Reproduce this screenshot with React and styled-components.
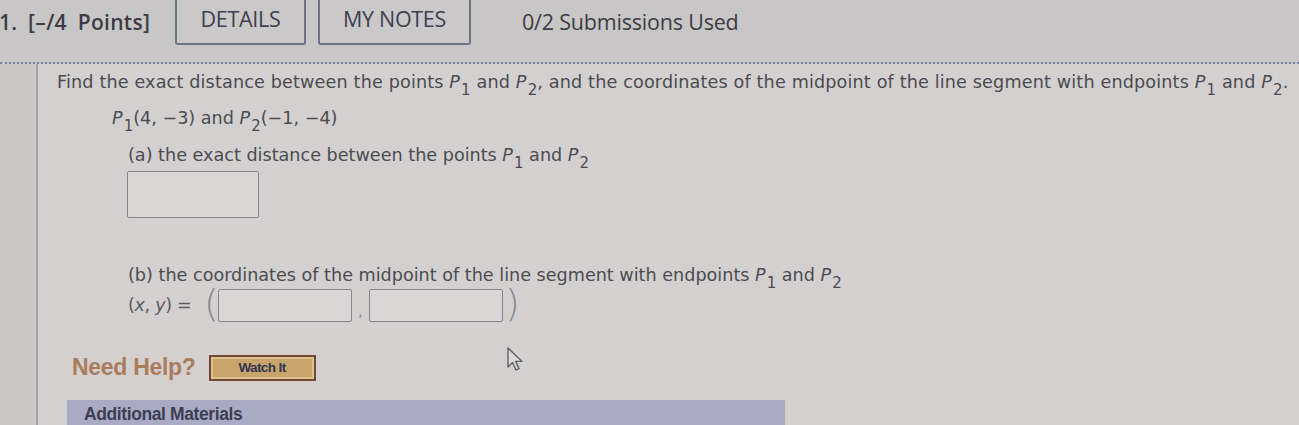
import React from "react";
import styled, { createGlobalStyle } from "styled-components";

const Global = createGlobalStyle`
  html, body { margin: 0; padding: 0; background: #d3cfcf; }
  body { width: 1299px; height: 425px; overflow: hidden; }
`;

const Page = styled.div`
  position: relative;
  width: 1299px;
  height: 425px;
  display: flex;
  flex-direction: column;
  background: #d4d0d0;
  overflow: hidden;
`;

const Header = styled.div`
  flex-shrink: 0;
  height: 62px;
  display: flex;
  align-items: flex-start;
  background: #c9c6c8;
  border-bottom: 2px dotted #7c83a0;
  font-family: "Open Sans", sans-serif;
  color: #3c3c44;
`;

const Points = styled.div`
  font-size: 21px;
  font-weight: 600;
  line-height: 44px;
  width: 176px;
  margin-left: -1px;
  word-spacing: 5px;
  letter-spacing: 0.3px;
`;

const Tab = styled.div`
  height: 45px;
  box-sizing: border-box;
  width: ${(p) => p.w}px;
  margin-right: ${(p) => p.mr}px;
  border: 2px solid #6d7384;
  border-top: none;
  border-radius: 0 0 3px 3px;
  display: flex;
  align-items: center;
  justify-content: center;
  font-size: 21.5px;
  color: #3e4150;
  background: #cbc8ca;
  padding-bottom: 6px;
  letter-spacing: -0.3px;
`;

const Submissions = styled.div`
  font-size: 21.5px;
  line-height: 44px;
  margin-left: 51px;
  color: #3c3c44;
  letter-spacing: -0.2px;
`;

const Body = styled.div`
  flex: 1;
  display: flex;
  min-height: 0;
`;

const Gutter = styled.div`
  width: 36px;
  background: #cbc7c7;
  border-right: 2px solid #a6a3a6;
`;

const Content = styled.div`
  flex: 1;
  padding: 7px 0 0 19px;
  display: flex;
  flex-direction: column;
  font-family: "DejaVu Sans", sans-serif;
  color: #4b4b50;
`;

const Line = styled.div`
  font-size: 17.6px;
  line-height: 22px;
  white-space: nowrap;
  padding-left: ${(p) => p.indent || 0}px;
  margin-top: ${(p) => p.gap || 0}px;
  letter-spacing: ${(p) => p.ls || 0}px;
`;

const Var = styled.span`
  font-style: oblique;
`;

const Sub = styled.sub`
  font-size: 15px;
  position: relative;
  vertical-align: baseline;
  top: 7px;
  margin-left: 1px;
`;

const AnswerBox = styled.div`
  box-sizing: border-box;
  width: ${(p) => p.w}px;
  height: ${(p) => p.h}px;
  border: 1.5px solid #86858a;
  background: #d9d6d6;
  border-radius: 2px;
`;

const BoxRow = styled.div`
  padding-left: ${(p) => p.indent}px;
  margin-top: ${(p) => p.gap}px;
  display: flex;
  align-items: center;
`;

const Pair = styled.div`
  display: flex;
  align-items: center;
  height: 34px;
  padding-left: 71px;
  margin-top: 1px;
`;

const PairLabel = styled.span`
  font-size: 17.5px;
  color: #5a5a60;
  width: 74px;
  margin-right: 2px;
  letter-spacing: -0.3px;
`;

const Paren = styled.span`
  display: inline-block;
  width: 14px;
  text-align: center;
  font-size: 38px;
  line-height: 34px;
  height: 34px;
  overflow: visible;
  color: #8a898e;
  font-family: "DejaVu Sans ExtraLight", "DejaVu Sans", sans-serif;
  font-weight: 200;
  margin: 0 ${(p) => p.m}px;
  padding-bottom: 4px;
`;

const Comma = styled.span`
  width: 17px;
  text-align: center;
  font-size: 14px;
  color: #8a898e;
  padding-top: 12px;
`;

const HelpRow = styled.div`
  display: flex;
  align-items: center;
  padding-left: 15px;
  margin-top: 32px;
`;

const HelpText = styled.span`
  font-family: "Liberation Sans", Arial, sans-serif;
  font-weight: 700;
  font-size: 23px;
  color: #a97d5c;
  margin-right: 13px;
  letter-spacing: -0.3px;
`;

const WatchButton = styled.div`
  box-sizing: border-box;
  width: 107px;
  height: 26px;
  border: 2px solid #6e4b32;
  background: #c9a56c;
  box-shadow: inset 0 0 0 2px #dcc08e;
  display: flex;
  align-items: center;
  justify-content: center;
  font-family: "Liberation Sans", Arial, sans-serif;
  font-weight: 700;
  font-size: 13.5px;
  color: #2f3552;
  letter-spacing: -0.6px;
`;

const Materials = styled.div`
  margin: 19px 0 0 10px;
  width: 718px;
  height: 40px;
  flex-shrink: 0;
  background: #a9abc4;
  box-sizing: border-box;
  padding: 3px 0 0 17px;
  font-family: "Liberation Sans", Arial, sans-serif;
  font-weight: 700;
  font-size: 17.5px;
  line-height: 22px;
  color: #3c3e52;
  letter-spacing: -0.4px;
`;

const Cursor = styled.svg`
  position: absolute;
  left: 506px;
  top: 346px;
`;

const P = ({ n }) => (
  <>
    <Var>P</Var>
    <Sub>{n}</Sub>
  </>
);

export default function App() {
  return (
    <>
      <Global />
      <Page>
        <Header>
          <Points>1. [–/4 Points]</Points>
          <Tab w={131} mr={12}>DETAILS</Tab>
          <Tab w={153} mr={0}>MY NOTES</Tab>
          <Submissions>0/2 Submissions Used</Submissions>
        </Header>
        <Body>
          <Gutter />
          <Content>
            <Line ls={0.15}>
              Find the exact distance between the points <P n="1" /> and <P n="2" />, and the
              coordinates of the midpoint of the line segment with endpoints <P n="1" /> and <P n="2" />.
            </Line>
            <Line indent={55} gap={13}>
              <P n="1" />(4, −3) and <P n="2" />(−1, −4)
            </Line>
            <Line indent={71} gap={14}>
              (a) the exact distance between the points <P n="1" /> and <P n="2" />
            </Line>
            <BoxRow indent={70} gap={4}>
              <AnswerBox w={132} h={47} />
            </BoxRow>
            <Line indent={71} gap={46}>
              (b) the coordinates of the midpoint of the line segment with endpoints <P n="1" /> and <P n="2" />
            </Line>
            <Pair>
              <PairLabel>
                (<Var>x</Var>, <Var>y</Var>) =
              </PairLabel>
              <Paren m={0}>(</Paren>
              <AnswerBox w={134} h={33} />
              <Comma>,</Comma>
              <AnswerBox w={134} h={33} />
              <Paren m={2}>)</Paren>
            </Pair>
            <HelpRow>
              <HelpText>Need Help?</HelpText>
              <WatchButton>Watch It</WatchButton>
            </HelpRow>
            <Materials>Additional Materials</Materials>
          </Content>
        </Body>
        <Cursor width="20" height="28" viewBox="0 0 20 28">
          <path
            d="M2 2 L2 21 L6.5 16.5 L10 24 L13 22.6 L9.6 15.4 L16 15.4 Z"
            fill="#dcd9da"
            stroke="#5a5a62"
            strokeWidth="1.3"
            strokeLinejoin="round"
          />
        </Cursor>
      </Page>
    </>
  );
}
